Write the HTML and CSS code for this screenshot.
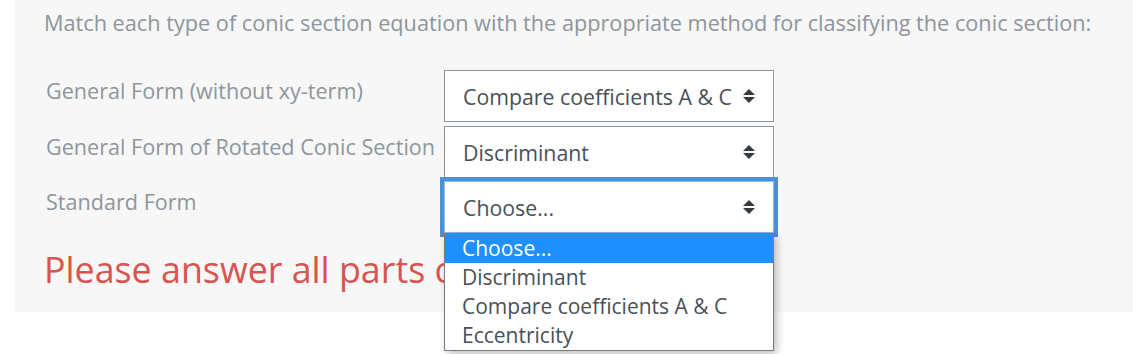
FILE: index.html
```html
<!DOCTYPE html>
<html lang="en">
<head>
<meta charset="utf-8">
<title>Conic sections</title>
<link rel="stylesheet" href="styles.css">
</head>
<body>
<div class="page">
<div class="panel">
  <p class="prompt">Match each type of conic section equation with the appropriate method for classifying the conic section:</p>
  <div class="rows">
    <div class="row">
      <div class="label">General Form (without xy-term)</div>
      <div class="select">
        <span class="value">Compare coefficients A &amp; C</span>
        <svg class="arrow" width="12" height="14" viewBox="0 0 12 14"><polygon points="0,6 6,0 12,6"/><polygon points="0,8 6,14 12,8"/></svg>
      </div>
    </div>
    <div class="row">
      <div class="label">General Form of Rotated Conic Section</div>
      <div class="select">
        <span class="value">Discriminant</span>
        <svg class="arrow" width="12" height="14" viewBox="0 0 12 14"><polygon points="0,6 6,0 12,6"/><polygon points="0,8 6,14 12,8"/></svg>
      </div>
    </div>
    <div class="row">
      <div class="label">Standard Form</div>
      <div class="select-wrap">
        <div class="select focused">
          <span class="value">Choose...</span>
          <svg class="arrow" width="12" height="14" viewBox="0 0 12 14"><polygon points="0,6 6,0 12,6"/><polygon points="0,8 6,14 12,8"/></svg>
        </div>
        <ul class="menu">
          <li class="opt active">Choose...</li>
          <li class="opt">Discriminant</li>
          <li class="opt">Compare coefficients A &amp; C</li>
          <li class="opt">Eccentricity</li>
        </ul>
      </div>
    </div>
  </div>
  <p class="error">Please answer all parts of the question.</p>
</div>
</div>
</body>
</html>
```
FILE: styles.css
```css
html, body {
  margin: 0;
  padding: 0;
  background: #ffffff;
}
body {
  font-family: "Open Sans", "Noto Sans", sans-serif;
}
.page {
  min-height: 354px;
}
.panel {
  margin-left: 15px;
  height: 312px;
  background: #f7f7f7;
  padding: 0 0 0 29px;
  box-sizing: border-box;
  overflow: visible;
}
.prompt {
  margin: 0;
  padding-top: 6px;
  font-size: 21.7px;
  line-height: 33px;
  color: #8e959c;
}
.rows {
  margin-top: 31px;
  display: flex;
  flex-direction: column;
  gap: 4px;
}
.row {
  display: flex;
  align-items: flex-start;
}
.row + .row + .row {
  margin-top: -1px;
}
.label {
  width: 400px;
  padding-left: 2px;
  box-sizing: border-box;
  font-size: 21.6px;
  line-height: 30px;
  padding-top: 6px;
  color: #8e959c;
  white-space: nowrap;
}
.select-wrap {
  position: relative;
}
.select {
  width: 330px;
  height: 52px;
  box-sizing: border-box;
  border: 1px solid #8f959e;
  background: #ffffff;
  display: flex;
  align-items: center;
  padding: 0 18px 0 18px;
  font-size: 21.3px;
  color: #495057;
}
.select .value {
  flex: 1;
  white-space: nowrap;
}
.arrow {
  fill: #343a40;
  flex: none;
}
.select.focused {
  border-color: #8fb8e6;
  box-shadow: 0 0 0 4px #4b91d6;
}
.menu {
  position: absolute;
  left: 0;
  top: 52px;
  width: 330px;
  box-sizing: border-box;
  margin: 0;
  padding: 0;
  list-style: none;
  background: #ffffff;
  border: 1px solid #7a7a7a;
  box-shadow: 3px 3px 8px rgba(0, 0, 0, 0.25);
  z-index: 2;
}
.opt {
  height: 29px;
  line-height: 29px;
  padding-left: 17px;
  font-size: 21px;
  color: #495057;
  white-space: nowrap;
}
.opt.active {
  background: #1e90ff;
  color: #ffffff;
}
.error {
  margin: 9px 0 0 0;
  font-size: 35.8px;
  line-height: 54px;
  color: #d9534f;
}
```
